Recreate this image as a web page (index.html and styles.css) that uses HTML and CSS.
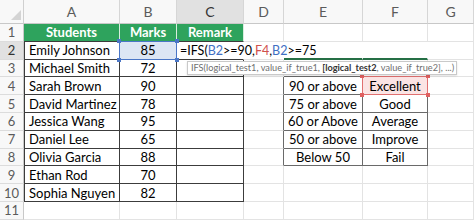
FILE: index.html
```html
<!DOCTYPE html>
<html lang="en">
<head>
    <meta charset="UTF-8">
    <title>IFS formula</title>
    <link rel="stylesheet" href="styles.css">
</head>
<body>
    <div class="sheet">
        <!-- column headers -->
        <div class="corner"></div>
        <div class="hd">A</div>
        <div class="hd">B</div>
        <div class="hd sel">C</div>
        <div class="hd">D</div>
        <div class="hd">E</div>
        <div class="hd">F</div>
        <div class="hd">G</div>

        <div class="rh">1</div>
        <div class="g">Students</div>
        <div class="g">Marks</div>
        <div class="g">Remark</div>
        <div></div><div></div><div></div><div></div>

        <div class="rh sel">2</div>
        <div class="t a name">Emily Johnson</div>
        <div class="t num ref-blue">85<span class="refbox blue"><i class="h tl"></i><i class="h tr"></i><i class="h bl"></i><i class="h br"></i></span></div>
        <div class="t edit">=IFS(<span class="fb">B2</span>&gt;=90,<span class="fr">F4</span>,<span class="fb">B2</span>&gt;=75<span class="caret"></span></div>
        <div class="blank"></div>
        <div class="blank gline"></div>
        <div class="blank gline"></div>
        <div></div>

        <div class="rh">3</div>
        <div class="t a name">Michael Smith</div>
        <div class="t num">72</div>
        <div class="t"></div>
        <div></div>
        <div class="top"></div>
        <div class="top"></div>
        <div></div>

        <div class="rh">4</div>
        <div class="t a name">Sarah Brown</div>
        <div class="t num">90</div>
        <div class="t"></div>
        <div class="edge"></div>
        <div class="r">90 or above</div>
        <div class="r ref-red">Excellent<span class="refbox red"><i class="h tl"></i><i class="h tr"></i><i class="h bl"></i><i class="h br"></i></span></div>
        <div></div>

        <div class="rh">5</div>
        <div class="t a name">David Martinez</div>
        <div class="t num">78</div>
        <div class="t"></div>
        <div class="edge"></div>
        <div class="r">75 or above</div>
        <div class="r">Good</div>
        <div></div>

        <div class="rh">6</div>
        <div class="t a name">Jessica Wang</div>
        <div class="t num">95</div>
        <div class="t"></div>
        <div class="edge"></div>
        <div class="r">60 or Above</div>
        <div class="r">Average</div>
        <div></div>

        <div class="rh">7</div>
        <div class="t a name">Daniel Lee</div>
        <div class="t num">65</div>
        <div class="t"></div>
        <div class="edge"></div>
        <div class="r">50 or above</div>
        <div class="r">Improve</div>
        <div></div>

        <div class="rh">8</div>
        <div class="t a name">Olivia Garcia</div>
        <div class="t num">88</div>
        <div class="t"></div>
        <div class="edge"></div>
        <div class="r">Below 50</div>
        <div class="r">Fail</div>
        <div></div>

        <div class="rh">9</div>
        <div class="t a name">Ethan Rod</div>
        <div class="t num">70</div>
        <div class="t"></div>
        <div></div><div></div><div></div><div></div>

        <div class="rh">10</div>
        <div class="t a name">Sophia Nguyen</div>
        <div class="t num">82</div>
        <div class="t"></div>
        <div></div><div></div><div></div><div></div>

        <div class="rh">11</div>
        <div></div><div></div><div></div><div></div><div></div><div></div><div></div>

        <!-- function hint shown while typing the formula -->
        <div class="tip">IFS(logical_test1, value_if_true1, <b>[logical_test2</b>, value_if_true2], ...)</div>
    </div>
</body>
</html>
```
FILE: styles.css
```css
body {
    margin: 0;
    background: #fff;
    font-family: Lato, "Liberation Sans", sans-serif;
}

.sheet {
    position: relative;
    display: grid;
    grid-template-columns: 24px 96px 57px 67px 40px 79px 65px 46px;
    grid-template-rows: 24px repeat(11, 17.8px);
    width: 474px;
    height: 220px;
    overflow: hidden;
}

.sheet > div {
    box-sizing: border-box;
    display: flex;
    align-items: center;
    border-right: 1px solid #e3e3e3;
    border-bottom: 1px solid #e3e3e3;
    font-size: 13px;
    color: #000;
    white-space: nowrap;
}

/* headers */
.corner {
    position: relative;
    background: #f8f8f8;
    border-right-color: #d0d0d0 !important;
    border-bottom-color: #c8c8c8 !important;
}

.corner::after {
    content: "";
    position: absolute;
    right: 2px;
    bottom: 3px;
    border-left: 10px solid transparent;
    border-bottom: 10px solid #d4d4d4;
}

.sheet > .hd {
    justify-content: center;
    background: #f8f8f8;
    color: #5b5b5b;
    font-size: 14px;
    border-right-color: #d6d6d6;
    border-bottom-color: #c8c8c8;
}

.sheet > .rh {
    justify-content: center;
    background: #f8f8f8;
    color: #5b5b5b;
    font-size: 13px;
    border-right-color: #c8c8c8;
    border-bottom-color: #dcdcdc;
}

.sheet > .sel {
    background: #e1e1e1;
    color: #333;
}

/* green title row */
.sheet > .g {
    justify-content: center;
    background: #2ea35d;
    color: #fff;
    font-weight: bold;
    border-right-color: #d8eede;
    border-bottom-color: #3c3c3c;
}

/* student table */
.sheet > .t {
    border-right-color: #3c3c3c;
    border-bottom-color: #3c3c3c;
}

.sheet > .a {
    border-left: 1px solid #3c3c3c;
}

.name {
    padding-left: 4px;
}

.num {
    justify-content: center;
}

.ref-blue {
    position: relative;
    background: #dce6f4;
}

.refbox {
    position: absolute;
    z-index: 3;
    left: -1px;
    top: -1px;
    right: -1px;
    bottom: -1px;
    border: 1px solid;
}

.refbox.blue {
    border-color: #4a76c6;
}

.refbox.red {
    border-color: #e07070;
}

.h {
    position: absolute;
    width: 4px;
    height: 4px;
}

.blue .h {
    background: #4a76c6;
}

.red .h {
    background: #e06060;
}

.tl { left: -3px; top: -3px; }
.tr { right: -3px; top: -3px; }
.bl { left: -3px; bottom: -3px; }
.br { right: -3px; bottom: -3px; }

/* cell being edited */
.sheet > .edit {
    position: relative;
    z-index: 1;
    padding-left: 3px;
    overflow: visible;
    border-right-color: transparent;
    background: #fff;
    font-size: 12.5px;
}

.fb {
    color: #3f6fc3;
}

.fr {
    color: #d0504c;
}

.caret {
    display: inline-block;
    width: 1px;
    height: 14px;
    margin-left: 1px;
    background: #000;
}

.sheet > .blank {
    border-right-color: transparent;
    background: transparent;
}

.sheet > .gline {
    border-bottom: 2px solid #256f45;
}

/* grading table */
.sheet > .top {
    border-bottom-color: #6a6a6a;
}

.sheet > .edge {
    border-right-color: #6a6a6a;
}

.sheet > .r {
    justify-content: center;
    border-right-color: #6a6a6a;
    border-bottom-color: #6a6a6a;
}

.ref-red {
    position: relative;
    background: #fbe4e4;
}

/* function tooltip */
.sheet > .tip {
    display: block;
    position: absolute;
    z-index: 4;
    left: 187px;
    top: 61px;
    width: 270px;
    height: 14px;
    padding-left: 3px;
    border: 1px solid #c9c9c9;
    background: #fff;
    color: #6e6e6e;
    font-size: 9.2px;
    line-height: 12px;
    box-shadow: 0 1px 2px rgba(0,0,0,0.12);
}

.tip b {
    color: #333;
}
```
